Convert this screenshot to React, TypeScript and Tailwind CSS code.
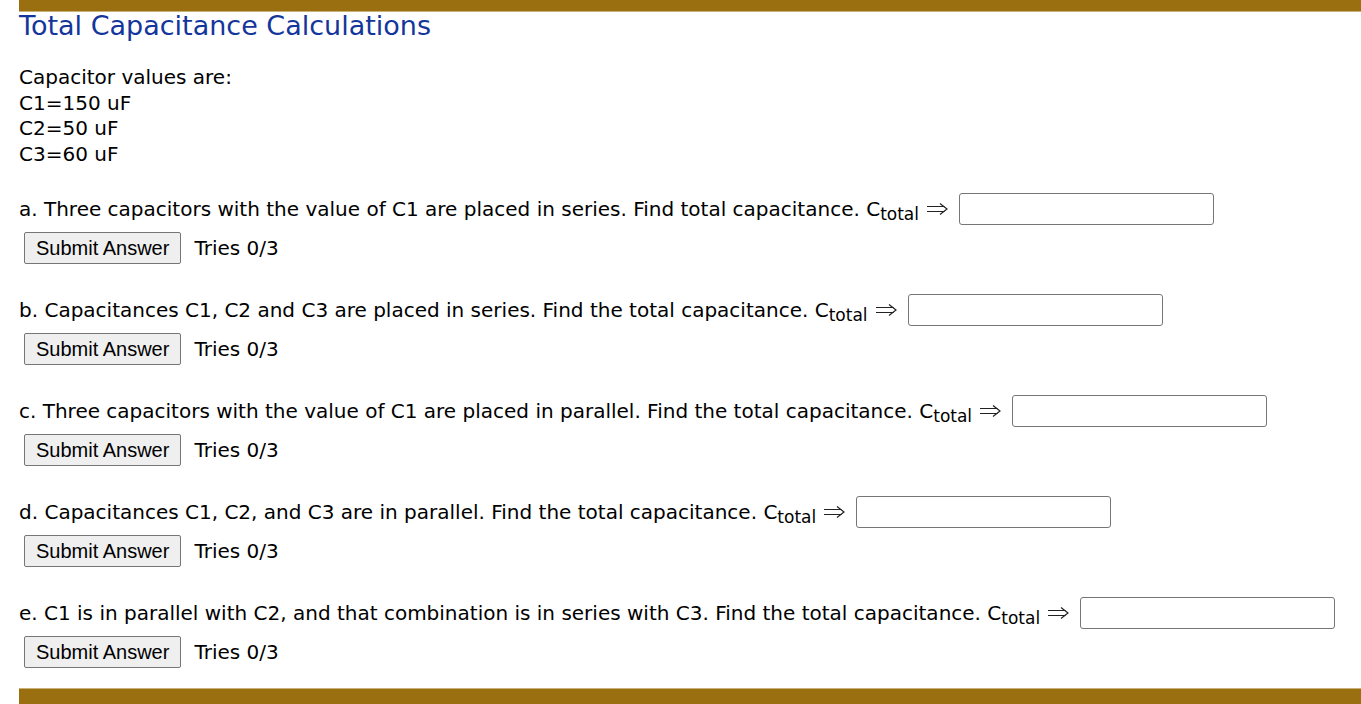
import React from "react";

const questions = [
  "a. Three capacitors with the value of C1 are placed in series. Find total capacitance.",
  "b. Capacitances C1, C2 and C3 are placed in series. Find the total capacitance.",
  "c. Three capacitors with the value of C1 are placed in parallel. Find the total capacitance.",
  "d. Capacitances C1, C2, and C3 are in parallel. Find the total capacitance.",
  "e. C1 is in parallel with C2, and that combination is in series with C3. Find the total capacitance.",
];

function Arrow() {
  return (
    <svg width="21" height="12" viewBox="0 0 21 12" className="ml-[8px] mr-[11px] shrink-0" fill="none" stroke="#222" strokeWidth="1.2">
      <path d="M0 3.5H17.5M0 8.5H17.5" />
      <path d="M13 0.5L20 6L13 11.5" />
    </svg>
  );
}

export default function App() {
  return (
    <div className="h-[704px] w-[1361px] overflow-hidden bg-white pl-[19px]" style={{ fontFamily: '"DejaVu Sans", Verdana, sans-serif' }}>
      <div className="h-[12px] border-b border-[#c9b27a] bg-[#996f0f]" />
      <h1 className="mt-[1px] text-[27px] leading-[26px] text-[#14369b]">Total Capacitance Calculations</h1>
      <div className="mt-[26px] text-[20px] leading-[25.5px] text-black">
        <div>Capacitor values are:</div>
        <div>C1=150 uF</div>
        <div>C2=50 uF</div>
        <div>C3=60 uF</div>
      </div>
      <div className="mt-[22px] flex flex-col gap-[26px]">
        {questions.map((q, i) => (
          <div key={i}>
            <div className="flex h-[40px] items-center text-[20px] text-black">
              <span className="whitespace-nowrap">
                {q}&nbsp;C<sub className="text-[17px]">total</sub>
              </span>
              <Arrow />
              <input className="h-[32px] w-[255px] rounded-[3px] border border-[#767676] bg-white" />
            </div>
            <div className="mt-[3px] flex items-center">
              <button className="ml-[5px] h-[32px] rounded-[2px] border border-[#767676] bg-[#efefef] px-[11px] text-[20px] text-black" style={{ fontFamily: '"Liberation Sans", Arial, sans-serif' }}>
                Submit Answer
              </button>
              <span className="ml-[13px] text-[20px] text-black">Tries 0/3</span>
            </div>
          </div>
        ))}
      </div>
      <div className="mt-[20px] h-[20px] border-t border-[#c9b27a] bg-[#996f0f]" />
    </div>
  );
}
